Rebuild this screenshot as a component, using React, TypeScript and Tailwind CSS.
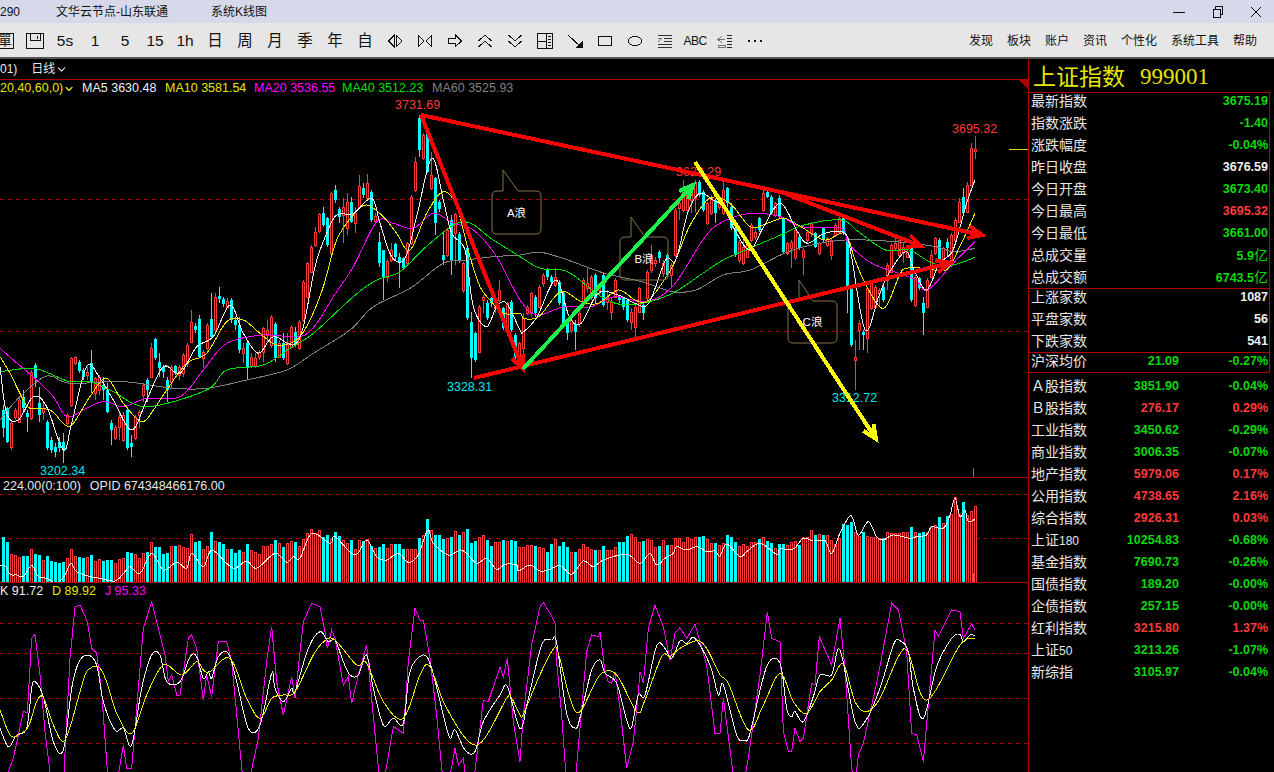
import { ChevronDown } from "lucide-react";

type Pt = [number, number];

// chart data is read off the zoomed picture: x/y are crop coordinates, scaled back in parse()
const parse = (s: string, sx: number, ox: number, oy: number): Pt[] =>
  s
    .trim()
    .split(/\s+/)
    .map((a) => {
      const [x, y] = a.split(",").map(Number);
      return [x / sx + ox, y / 3 + oy] as Pt;
    });

const main = (a: string, b: string) => {
  const l = parse(a, 3, 0, 100);
  return [...l, ...parse(b, 2.958, 500, 100).filter((p) => p[0] > l[l.length - 1][0])];
};
const lower = (a: string, b: string) => {
  const l = parse(a, 3, 0, 475);
  return [...l, ...parse(b, 3, 510, 475).filter((p) => p[0] > l[l.length - 1][0])];
};

const smooth = (p: Pt[]) => {
  let d = `M${p[0][0]} ${p[0][1]}`;
  for (let i = 0; i < p.length - 1; i++) {
    const a = p[i - 1] || p[i];
    const b = p[i];
    const c = p[i + 1];
    const e = p[i + 2] || c;
    d += `C${b[0] + (c[0] - a[0]) / 6} ${b[1] + (c[1] - a[1]) / 6} ${c[0] - (e[0] - b[0]) / 6} ${c[1] - (e[1] - b[1]) / 6} ${c[0]} ${c[1]}`;
  }
  return d;
};

const ma5 = main(
  "0,800 20,940 55,960 100,890 140,920 190,1050 215,970 260,800 300,835 340,900 395,990 440,900 490,800 540,820 590,740 640,710 690,615 730,700 775,760 820,710 880,735 910,680 945,500 980,400 1010,345 1060,340 1115,295 1140,370 1175,470 1215,475 1250,350 1295,175 1330,300 1355,400 1395,450 1420,620 1460,680 1490,620 1520,610 1560,690",
  "70,695 110,650 165,540 205,650 240,670 290,580 350,585 400,610 440,610 490,480 520,480 555,340 590,280 630,300 660,320 700,400 740,450 780,380 830,310 880,395 910,430 960,400 1020,400 1040,470 1080,690 1120,590 1150,520 1200,455 1225,510 1262,570 1300,490 1340,450 1380,310 1405,240"
);
const ma10 = main(
  "0,770 30,820 70,900 90,925 150,930 195,975 220,970 270,890 320,835 370,910 425,965 460,930 500,870 560,790 620,760 680,665 730,660 780,700 830,735 890,720 930,660 970,560 1010,420 1060,345 1100,315 1150,350 1190,400 1230,450 1280,340 1330,275 1370,320 1410,470 1440,560 1470,600 1510,640 1560,640",
  "70,655 115,650 180,575 240,605 290,610 350,570 400,600 440,600 510,500 560,380 620,295 680,310 740,380 790,370 840,355 890,380 960,420 1020,400 1050,480 1085,560 1135,625 1180,530 1200,505 1260,505 1320,510 1360,440 1405,340"
);
const ma20 = main(
  "0,745 40,780 110,840 160,890 200,950 250,930 290,910 320,905 370,920 440,895 540,890 610,810 680,730 790,705 900,710 950,670 1000,590 1060,500 1130,365 1180,370 1240,385 1300,340 1360,370 1420,390 1490,470 1560,600",
  "110,645 190,620 270,620 340,590 430,605 510,560 600,420 650,370 740,340 830,350 890,380 1010,385 1030,430 1100,490 1180,520 1230,540 1265,570 1340,490 1405,425"
);
const ma40 = main(
  "0,815 100,805 170,830 210,845 270,845 340,875 440,920 620,870 680,810 790,795 870,745 940,700 1060,590 1130,540 1200,515 1290,430 1390,365 1480,420 1560,470",
  "120,505 200,515 300,590 380,615 500,585 600,520 660,480 750,440 830,405 900,375 1010,360 1060,395 1140,450 1210,450 1280,490 1340,495 1405,472"
);
const ma60 = main(
  "0,960 60,890 140,828 210,850 370,845 520,865 620,865 740,840 860,810 940,760 1050,690 1120,620 1230,565 1330,490 1400,480 1480,470 1560,465",
  "120,457 200,480 310,520 420,545 510,575 580,570 660,525 740,510 830,465 900,440 1020,420 1170,425 1290,440 1340,455 1405,445"
);

const volLine = lower(
  "0,272 15,272 30,298 50,300 70,305 95,272 115,305 140,310 170,325 195,300 212,265 230,290 270,305 300,310 345,318 375,290 390,275 420,295 455,235 490,285 530,262 560,280 575,235 610,275 635,225 680,265 705,280 740,258 770,280 825,235 860,262 880,245 900,250 935,175 990,205 1005,185 1065,240 1100,195 1130,245 1160,255 1195,235 1225,262 1255,240 1283,165 1300,205 1345,240 1380,225 1400,235 1430,265 1460,250 1490,283 1515,268 1550,270",
  "25,288 60,270 90,288 115,285 150,272 185,298 220,258 250,275 280,255 350,238 390,265 420,235 440,270 465,250 490,235 500,215 530,225 560,215 590,230 615,228 630,243 650,207 690,245 710,230 750,205 800,238 810,222 850,222 880,190 910,198 945,197 965,235 990,175 1023,122 1045,180 1075,140 1100,185 1120,195 1150,180 1200,190 1220,185 1250,180 1265,155 1300,160 1320,120 1335,70 1350,125 1365,105 1375,140 1395,132"
);

const kLine = lower(
  "0,760 25,815 50,780 80,760 95,640 105,620 130,665 160,800 190,825 215,640 235,565 262,540 290,570 310,680 345,765 370,760 395,810 425,640 455,540 480,540 500,620 540,620 570,545 590,545 610,610 625,590 635,610 655,545 685,535 710,620 745,760 780,750 815,595 825,640 850,680 875,640 885,650 925,520 960,470 985,500 1005,495 1030,560 1050,600 1075,600 1100,540 1120,640 1150,750 1180,730 1210,745 1230,590 1270,540 1295,580 1330,720 1350,790 1365,765 1395,825 1425,830 1450,740 1500,660 1522,635 1560,760",
  "55,670 95,510 125,495 140,505 170,715 197,760 212,720 245,585 270,555 285,595 320,625 350,735 365,755 385,660 405,660 440,513 465,520 485,550 510,498 530,505 555,490 600,570 625,660 640,630 680,780 705,795 720,775 770,575 810,565 830,700 845,725 855,710 880,740 910,665 930,600 965,600 990,525 1035,740 1065,740 1110,640 1150,510 1170,497 1195,530 1210,640 1240,730 1280,575 1325,490 1350,478 1360,500 1380,480 1395,483"
);
const dLine = lower(
  "0,705 30,780 55,780 85,755 110,680 130,668 160,750 195,795 240,650 260,590 295,575 320,620 350,715 395,775 440,660 490,570 545,600 590,560 610,585 630,590 690,550 740,670 780,730 815,670 850,660 885,650 940,540 975,497 1005,495 1070,570 1100,565 1150,680 1210,730 1260,600 1290,575 1340,700 1430,810 1520,670 1535,670 1560,720",
  "40,718 85,610 130,522 145,535 180,670 210,710 270,600 320,600 380,710 405,675 455,545 480,545 510,520 560,497 590,520 630,600 655,625 715,765 760,690 810,595 850,680 890,715 930,650 965,615 1000,568 1035,680 1070,710 1110,670 1165,545 1195,533 1250,675 1350,510 1395,490"
);
const jLine = lower(
  "0,930 10,930 40,850 70,710 82,712 95,490 105,478 120,600 135,770 155,930 190,930 210,550 225,395 240,390 262,440 275,520 290,535 305,650 325,930 350,930 370,810 380,880 395,880 430,460 455,380 475,460 495,540 505,620 515,600 530,660 540,660 565,490 575,480 590,520 610,675 620,600 635,665 655,500 680,500 695,560 715,770 730,930 745,930 775,790 800,560 815,455 830,620 850,720 875,605 885,670 910,440 935,385 960,395 975,470 982,520 995,465 1005,490 1030,630 1045,605 1055,685 1075,600 1100,510 1110,620 1140,930 1150,930 1180,755 1210,775 1225,560 1245,400 1260,435 1270,435 1290,550 1310,720 1330,930 1345,930 1365,820 1375,870 1390,850 1400,930 1420,930 1450,675 1465,680 1500,575 1510,605 1522,550 1540,740 1560,860",
  "40,720 65,510 90,395 100,382 120,415 135,445 140,560 155,720 170,930 195,930 210,760 230,530 245,480 265,485 270,470 285,590 295,620 305,625 315,590 330,700 350,880 370,800 385,650 390,590 400,625 415,460 435,390 460,455 480,555 495,475 510,458 530,490 555,448 590,570 615,775 630,775 640,670 665,860 672,930 700,930 715,850 750,600 772,410 785,490 810,500 820,770 835,830 845,830 855,760 870,800 880,790 905,625 915,630 928,485 965,570 990,430 1005,580 1025,880 1035,930 1045,840 1060,805 1105,600 1145,385 1165,405 1190,530 1205,775 1220,780 1240,860 1275,465 1285,485 1325,405 1350,410 1360,490 1385,447 1395,465"
);

// one candle per slot, 4px apart: colour, body top, body bottom, high, low
const candles = `
c930,985,915,1010 c925,1025,920,1030 r970,1040,960,1050 r930,950,925,960 r900,965,895,970 c890,925,870,940 c940,950,930,995 r815,955,810,960 c795,835,790,860 c910,945,860,965
r925,935,910,960 c965,1045,960,1050 c1020,1050,1010,1060 c1040,1055,1030,1070 c1025,1045,1010,1055 c1025,1050,1000,1090 r945,970,940,975 r775,915,770,920 r770,790,768,795 c785,812,780,820
c810,830,805,840 r815,825,800,840 c790,850,750,880 r835,880,830,900 r830,870,825,885 c855,870,830,900 c870,935,850,940 c970,990,960,1035 r980,1015,975,1020 r950,980,940,1020
r945,1020,935,1025 c930,1045,920,1050 c1030,1040,1005,1070 r950,1015,945,1020 r935,945,930,985 r855,885,850,905 c840,870,835,905 r745,830,730,835 c718,775,715,780 c785,805,760,830
c800,815,795,835 c840,870,830,905 r800,845,795,865 c798,820,795,825 r800,825,795,840 r765,820,760,830 r735,790,730,800 r665,725,630,730 c678,690,670,700 c658,770,645,775
r755,775,750,805 r675,745,670,750 c658,710,580,715 r590,690,580,700 c588,598,562,610 c598,612,590,620 r602,620,595,625 c600,660,595,670 c660,675,650,690 c675,750,650,760
r745,760,730,790 c730,800,725,840 r770,798,760,805 r775,798,760,805 r755,770,750,780 r685,755,680,785 r690,705,660,730 r650,735,645,745 c672,775,665,785 r730,770,720,775
c730,775,700,780 r730,790,700,795 r680,740,675,745 c695,735,680,740 r665,745,660,750 r545,660,540,665 r490,590,485,595 r440,515,435,520 r395,435,380,440 r342,392,338,400
c340,375,320,380 c355,435,350,440 r280,460,275,465 c270,300,255,310 c328,350,320,370 r320,345,295,430 r305,385,280,405 c305,365,290,370 r340,370,320,400 r258,320,225,325
c265,285,250,295 r250,295,222,300 c275,360,270,365 r348,362,340,370 c427,488,395,500 c450,530,450,600 r483,530,478,545 r450,480,430,485 c432,470,428,480 c470,490,460,565
c475,505,470,510 r430,490,425,495 r290,430,285,435 r185,270,170,275 c55,150,45,170 r105,175,100,180 c85,215,80,220 r225,265,155,270 c235,370,230,405 c305,328,300,335
c465,480,400,495 r390,465,385,470 c360,480,345,525 r342,400,338,495 c402,480,395,490 r490,570,485,580 c445,655,440,660 c665,775,635,835 c700,780,695,785 r620,755,615,760
r590,600,585,640 c610,655,600,660 c595,610,590,620 r615,625,610,640 r570,600,540,605 c625,685,620,690 r610,680,605,685 c605,690,600,695 c705,770,700,780 r730,790,725,800
r655,745,640,800 r620,640,615,645 r580,640,575,650 c590,640,585,650 r560,620,555,625 r525,550,520,560 c508,530,505,540 c530,545,525,555 r530,555,503,560 c545,610,540,615
c580,670,575,680 c670,700,660,720 r660,690,650,700 c672,695,660,750 r640,670,630,680 r540,605,535,620 r548,565,500,575 r530,590,525,600 c525,595,520,610 r560,570,550,585
c525,615,515,620 r590,605,570,630 r605,635,590,660 r540,590,535,595 c590,600,585,610 c595,620,590,630 c600,660,595,665 r635,665,625,690 r620,680,610,720 r565,635,560,640
c615,640,610,660 r515,595,510,600 r465,510,435,520 r480,490,470,500 c455,475,450,490 r490,520,480,530 c465,525,460,530 r495,525,490,560 r330,465,325,470 r310,325,300,360
r270,330,240,335 r285,330,275,340 r270,300,255,340 r245,295,240,335 c245,285,240,290 c275,330,270,335 r310,370,305,375 r290,340,285,345 c300,340,295,370 r295,320,285,330
r270,340,245,345 c265,310,260,320 c320,385,310,390 c385,465,380,470 r425,480,420,490 r440,490,420,495 r425,470,420,475 r375,420,370,425 r395,410,385,420 c355,390,350,395
r280,330,270,335 c275,290,270,295 c290,340,285,345 r310,345,305,350 c295,350,285,355 c355,455,350,460 r430,460,425,465 r425,445,420,505 r390,470,385,480 c410,445,405,450
r450,470,445,525 r395,420,390,430 r370,400,365,410 c400,440,395,445 r430,460,425,465 c385,420,380,425 r415,435,410,440 r420,465,415,480 r375,405,370,410 r355,395,350,400
c355,400,350,405 c420,560,415,640 c560,735,555,740 r770,780,720,870 r670,690,660,750 c695,705,690,750 r565,715,560,758 r550,625,545,630 r560,620,555,625 r570,580,565,620
c560,600,555,605 r495,540,490,570 r435,515,430,520 r430,445,415,450 r420,465,415,470 r440,455,430,490 r455,470,440,475 c440,600,435,605 r530,615,525,620 c535,565,530,570
c610,640,590,705 r540,620,535,625 r465,530,450,535 r415,460,410,465 c420,485,415,490 r445,480,440,500 c425,445,415,470 r405,480,400,500 r360,420,355,430 r305,365,295,370
c292,340,265,345 r255,335,245,340 r145,255,130,260 r148,152,108,178`
  .trim()
  .split(/\s+/)
  .map((s) => {
    const [t, b, h, l] = s.slice(1).split(",").map((n) => Number(n) / 3 + 100);
    return { up: s[0] === "r", t: Math.round(t), b: Math.round(b), h: Math.round(h), l: Math.round(l) };
  });

const volTops = [
  186, 201, 238, 241, 245, 243, 242, 222, 238, 240, 255, 243, 258, 261, 263, 261, 250, 222, 243, 246,
  248, 246, 240, 258, 253, 258, 256, 256, 265, 253, 250, 232, 234, 237, 250, 235, 232, 202, 215, 215,
  237, 235, 212, 212, 210, 216, 220, 178, 202, 198, 222, 213, 171, 198, 201, 207, 222, 222, 235, 225,
  232, 207, 225, 230, 236, 213, 213, 208, 195, 205, 215, 205, 198, 201, 213, 192, 175, 162, 175, 166,
  185, 180, 192, 171, 183, 195, 205, 195, 222, 195, 198, 192, 213, 218, 216, 208, 218, 208, 208, 208,
  222, 222, 222, 222, 190, 180, 132, 166, 180, 180, 192, 190, 186, 168, 180, 172, 162, 204, 198, 186,
  180, 195, 213, 202, 201, 196, 198, 195, 197, 216, 216, 210, 210, 213, 216, 218, 231, 207, 192, 213,
  201, 216, 231, 231, 222, 208, 215, 222, 224, 225, 213, 225, 225, 215, 201, 201, 183, 178, 186, 202,
  198, 192, 195, 216, 213, 195, 210, 210, 190, 190, 200, 186, 191, 186, 185, 183, 192, 203, 205, 210,
  204, 180, 186, 201, 214, 207, 212, 202, 202, 192, 187, 198, 203, 220, 208, 208, 211, 200, 198, 210,
  186, 187, 165, 180, 178, 180, 180, 194, 208, 190, 148, 150, 140, 172, 183, 172, 183, 185, 187, 190,
  188, 172, 175, 175, 174, 172, 172, 156, 172, 175, 172, 170, 155, 150, 126, 145, 122, 118, 65, 118,
  82, 120, 108, 93,
];

const RED = "#ff3a3a";
const CYAN = "#00ffff";

function Dash({ y }: { y: number }) {
  return <line x1={0} x2={1028} y1={y + 0.5} y2={y + 0.5} stroke="#a00000" strokeDasharray="4 4" />;
}

function Arrow({ x1, y1, x2, y2, color }: { x1: number; y1: number; x2: number; y2: number; color: string }) {
  const a = Math.atan2(y2 - y1, x2 - x1);
  const barb = (d: number) => `${x2 - 15 * Math.cos(a + d)},${y2 - 15 * Math.sin(a + d)}`;
  return (
    <g stroke={color} strokeWidth={4} fill="none">
      <line x1={x1} y1={y1} x2={x2} y2={y2} />
      <polyline points={`${barb(0.42)} ${x2},${y2} ${barb(-0.42)}`} />
    </g>
  );
}

function Bubble({ x, y, w, h, apex, base, label }: { x: number; y: number; w: number; h: number; apex: number; base: number; label: string }) {
  const r = 5;
  const d = `M${x + r} ${y}H${x + 11}V${apex}L${x + 11 + base} ${y}H${x + w - r}Q${x + w} ${y} ${x + w} ${y + r}V${y + h - r}Q${x + w} ${y + h} ${x + w - r} ${y + h}H${x + r}Q${x} ${y + h} ${x} ${y + h - r}V${y + r}Q${x} ${y} ${x + r} ${y}Z`;
  return (
    <g>
      <path d={d} fill="none" stroke="#85744a" />
      <text x={x + w / 2} y={y + h / 2 + 4} textAnchor="middle" fontSize={11.5} fill="#ffffff">
        {label}
      </text>
    </g>
  );
}

function PriceChart() {
  return (
    <svg width={1028} height={397} viewBox="0 80 1028 397" className="block" fontFamily="'Liberation Sans','Noto Sans CJK SC',sans-serif">
      <g shapeRendering="crispEdges">
        <Dash y={199} />
        <Dash y={331} />
        <line x1={1009} x2={1028} y1={149.5} y2={149.5} stroke="#d8d800" />
        <line x1={973.5} x2={973.5} y1={468} y2={477} stroke="#777777" />
        {candles.map((c, i) => {
          const x = 3 + 4 * i;
          const col = c.up ? RED : CYAN;
          return (
            <g key={i}>
              <line x1={x + 0.5} x2={x + 0.5} y1={c.h} y2={c.l} stroke={col} />
              {c.up ? (
                <rect x={x - 0.5} y={c.t + 0.5} width={2} height={Math.max(c.b - c.t, 1)} fill="#000000" stroke={col} />
              ) : (
                <rect x={x - 1} y={c.t} width={3} height={Math.max(c.b - c.t, 1)} fill={col} />
              )}
            </g>
          );
        })}
        <g fill="none">
          <path d={smooth(ma60)} stroke="#808080" />
          <path d={smooth(ma40)} stroke="#00e000" />
          <path d={smooth(ma20)} stroke="#ff00ff" />
          <path d={smooth(ma10)} stroke="#e8e800" />
          <path d={smooth(ma5)} stroke="#f0f0f0" />
        </g>
      </g>
      <g fontSize={12.5}>
        <text x={395} y={109} fill={RED}>3731.69</text>
        <text x={676} y={176} fill={RED}>3628.29</text>
        <text x={952} y={133} fill={RED}>3695.32</text>
        <text x={447} y={391} fill="#00e8e8">3328.31</text>
        <text x={832} y={402} fill="#00e8e8">3312.72</text>
        <text x={40} y={475} fill="#00e8e8">3202.34</text>
      </g>
      <Bubble x={492} y={191} w={49} h={43} apex={170} base={15} label="A浪" />
      <Bubble x={620} y={237} w={48} h={43} apex={217} base={14} label="B浪" />
      <Bubble x={788} y={301} w={49} h={42} apex={280} base={14} label="C浪" />
      <g shapeRendering="crispEdges">
        <Arrow x1={421} y1={115} x2={982} y2={235} color="#ff0000" />
        <Arrow x1={781} y1={192} x2={921} y2={246} color="#ff0000" />
        <Arrow x1={474} y1={378} x2={950} y2={263} color="#ff0000" />
        <Arrow x1={421} y1={115} x2={523} y2={369} color="#ff0000" />
        <Arrow x1={523} y1={369} x2={693} y2={185} color="#1cf24a" />
        <Arrow x1={695} y1={162} x2={876} y2={439} color="#ffff00" />
      </g>
    </svg>
  );
}

function VolumeChart() {
  return (
    <svg width={1028} height={104} viewBox="0 478 1028 104" className="block" shapeRendering="crispEdges">
      <Dash y={494} />
      <Dash y={538} />
      {volTops.map((z, i) => {
        const x = 3 + 4 * i;
        const y = Math.round(z / 3 + 475);
        return candles[i].up ? (
          <rect key={i} x={x - 0.5} y={y + 0.5} width={2} height={582 - y} fill="#000000" stroke={RED} />
        ) : (
          <rect key={i} x={x - 1} y={y} width={3} height={582 - y} fill={CYAN} />
        );
      })}
      <line x1={973.5} x2={973.5} y1={573} y2={582} stroke="#888888" />
      <path d={smooth(volLine)} fill="none" stroke="#f0f0f0" />
    </svg>
  );
}

function KdjChart() {
  return (
    <svg width={1028} height={189} viewBox="0 583 1028 189" className="block" shapeRendering="crispEdges">
      <Dash y={623} />
      <Dash y={653} />
      <Dash y={698} />
      <Dash y={743} />
      <polyline points={jLine.map((p) => p.join(",")).join(" ")} fill="none" stroke="#ff00ff" />
      <path d={smooth(kLine)} fill="none" stroke="#f0f0f0" />
      <path d={smooth(dLine)} fill="none" stroke="#e8e800" />
    </svg>
  );
}

const toolText = ["5s", "1", "5", "15", "1h", "日", "周", "月", "季", "年", "自"];

function ToolIcon({ children }: { children: React.ReactNode }) {
  return (
    <div className="flex h-full w-[30px] items-center justify-center">
      <svg width={18} height={18} viewBox="0 0 18 18" fill="none" stroke="#111111" shapeRendering="crispEdges">
        {children}
      </svg>
    </div>
  );
}

function Toolbar() {
  return (
    <div className="flex h-[34px] items-center overflow-hidden bg-[#e6e6e6] pt-[2px] text-[#111111]">
      <div className="-ml-[10px] flex h-full items-center">
        <div className="flex h-full w-[30px] items-center justify-center">
          <span className="border border-[#111111] px-[1px] text-[13px] leading-[14px]">單</span>
        </div>
        <ToolIcon>
          <path d="M0.5 1.5H17.5V16.5H0.5ZM4.5 1.5V8.5H14.5V1.5M11.5 3.5V6.5" />
        </ToolIcon>
        {toolText.map((t) => (
          <div key={t} className="flex h-full w-[30px] items-center justify-center text-[15.5px]">
            {t}
          </div>
        ))}
        <ToolIcon>
          <path d="M8 3.5V14.5L2.5 9ZM10.5 3.5V14.5L16 9Z" />
        </ToolIcon>
        <ToolIcon>
          <path d="M2.5 3.5V14.5L8 9ZM15.5 3.5V14.5L10 9Z" />
        </ToolIcon>
        <ToolIcon>
          <path d="M2.5 6.5H9.5V3L15.5 9L9.5 14.5V11.5H2.5Z" />
        </ToolIcon>
        <ToolIcon>
          <path d="M2.5 9L9 3L15.5 9M2.5 15L9 9L15.5 15" />
        </ToolIcon>
        <ToolIcon>
          <path d="M2.5 3L9 9L15.5 3M2.5 9L9 15L15.5 9" />
        </ToolIcon>
        <ToolIcon>
          <path d="M1.5 1.5H16.5V16.5H1.5ZM10.5 1.5V16.5M1.5 9.5H10.5M12 4.5H15M12 7.5H15M12 10.5H15M12 13.5H15" />
        </ToolIcon>
        <ToolIcon>
          <path d="M2 3L15 15" />
          <path d="M11 15H16V10Z" fill="#111111" />
        </ToolIcon>
        <ToolIcon>
          <rect x={2.5} y={4.5} width={13} height={9} />
        </ToolIcon>
        <ToolIcon>
          <ellipse cx={9} cy={9} rx={7} ry={4.5} />
        </ToolIcon>
        <ToolIcon>
          <path d="M2 3.5H16M8 6.5H16M8 9.5H16M2 12.5H16M2 15.5H16" stroke="#333333" />
          <path d="M2 10L6 6M2 6.5H5" stroke="#777777" />
        </ToolIcon>
        <div className="flex h-full w-[30px] items-center justify-center text-[12px] tracking-[-0.5px]">ABC</div>
        <ToolIcon>
          <path d="M11 3.5H16M11 6.5H16M11 9.5H16M11 12.5H16M11 15.5H16" stroke="#222222" strokeWidth={1} />
          <path d="M2 7.5H9M6 4L2 7.5L6 11M2 13H9V15.5H2Z" stroke="#777777" />
        </ToolIcon>
        <div className="flex h-full w-[30px] items-center justify-center gap-[4px]">
          <i className="size-[2px] bg-[#111111]" />
          <i className="size-[2px] bg-[#111111]" />
          <i className="size-[2px] bg-[#111111]" />
        </div>
      </div>
      <div className="ml-auto flex gap-[14px] pr-[17px] text-[12px]">
        {["发现", "板块", "账户", "资讯", "个性化", "系统工具", "帮助"].map((m) => (
          <span key={m}>{m}</span>
        ))}
      </div>
    </div>
  );
}

function TitleBar() {
  return (
    <div className="flex h-[23px] items-center bg-[#d5d9e9] text-[12px] text-[#111111]">
      <span className="w-[56px]">290</span>
      <span className="w-[155px]">文华云节点-山东联通</span>
      <span>系统K线图</span>
      <div className="ml-auto flex">
        <div className="flex w-[39px] justify-center">
          <svg width={14} height={14} viewBox="0 0 14 14" stroke="#111111" shapeRendering="crispEdges">
            <path d="M1 7.5H13" />
          </svg>
        </div>
        <div className="flex w-[39px] justify-center">
          <svg width={14} height={14} viewBox="0 0 14 14" fill="none" stroke="#111111" shapeRendering="crispEdges">
            <path d="M2.5 4.5H9.5V12.5H2.5ZM4.5 4.5V1.5H11.5V9.5H9.5" />
          </svg>
        </div>
        <div className="flex w-[37px] justify-center">
          <svg width={14} height={14} viewBox="0 0 14 14" stroke="#111111">
            <path d="M2 2L12 12M12 2L2 12" />
          </svg>
        </div>
      </div>
    </div>
  );
}

const GREEN = "text-[#0cd80c]";
const PINK = "text-[#ff3a3a]";
const WHITE = "text-[#f0f0f0]";

function QuoteRow({ label, value, tone }: { label: string; value: React.ReactNode; tone: string }) {
  return (
    <div className="flex h-[22px] shrink-0 items-center justify-between pl-[2px] pr-[1px]">
      <span className="text-[14px] text-[#e8e8e8]">{label}</span>
      <span className={`text-[12.5px] font-bold ${tone}`}>{value}</span>
    </div>
  );
}

function IndexRow({ label, price, pct, up }: { label: React.ReactNode; price: string; pct: string; up: boolean }) {
  const tone = up ? PINK : GREEN;
  return (
    <div className="grid h-[22px] grid-cols-[60px_88px_89px] items-center pl-[2px] text-[12.5px] font-bold">
      <span className="whitespace-nowrap text-[14px] font-normal text-[#e8e8e8]">{label}</span>
      <span className={`text-right ${tone}`}>{price}</span>
      <span className={`text-right ${tone}`}>{pct}</span>
    </div>
  );
}

const yi = <span className="text-[14px] font-normal">亿</span>;

const indexes: [React.ReactNode, string, string, boolean][] = [
  ["Ａ股指数", "3851.90", "-0.04%", false],
  ["Ｂ股指数", "276.17", "0.29%", true],
  ["工业指数", "3450.62", "-0.29%", false],
  ["商业指数", "3006.35", "-0.07%", false],
  ["地产指数", "5979.06", "0.17%", true],
  ["公用指数", "4738.65", "2.16%", true],
  ["综合指数", "2926.31", "0.03%", true],
  [<>上证<span className="text-[12px]">180</span></>, "10254.83", "-0.68%", false],
  ["基金指数", "7690.73", "-0.26%", false],
  ["国债指数", "189.20", "-0.00%", false],
  ["企债指数", "257.15", "-0.00%", false],
  ["红利指数", "3215.80", "1.37%", true],
  [<>上证<span className="text-[12px]">50</span></>, "3213.26", "-1.07%", false],
  ["新综指", "3105.97", "-0.04%", false],
];

function QuotePanel() {
  return (
    <div className="flex-1 border-l border-[#b00000]">
      <div className="flex h-[33px] items-end pl-[4px] text-[#e6e600]">
        <span className="text-[23px] leading-[30px]">上证指数</span>
        <span className="ml-[15px] font-['Liberation_Serif',serif] text-[23px] leading-[30px]">999001</span>
      </div>
      <div className="w-[241px]">
        <div className="flex h-[197px] flex-col justify-end border-y border-r border-[#b00000]">
          <QuoteRow label="最新指数" value="3675.19" tone={GREEN} />
          <QuoteRow label="指数涨跌" value="-1.40" tone={GREEN} />
          <QuoteRow label="涨跌幅度" value="-0.04%" tone={GREEN} />
          <QuoteRow label="昨日收盘" value="3676.59" tone={WHITE} />
          <QuoteRow label="今日开盘" value="3673.40" tone={GREEN} />
          <QuoteRow label="今日最高" value="3695.32" tone={PINK} />
          <QuoteRow label="今日最低" value="3661.00" tone={GREEN} />
          <QuoteRow label="总成交量" value={<>5.9{yi}</>} tone={GREEN} />
          <QuoteRow label="总成交额" value={<>6743.5{yi}</>} tone={GREEN} />
        </div>
        <div className="flex h-[64px] flex-col justify-end border-b border-r border-[#b00000]">
          <QuoteRow label="上涨家数" value="1087" tone={WHITE} />
          <QuoteRow label="平盘家数" value="56" tone={WHITE} />
          <QuoteRow label="下跌家数" value="541" tone={WHITE} />
        </div>
        <div className="flex h-[20px] flex-col justify-end border-b border-r border-[#b00000]">
          <div className="shrink-0">
            <IndexRow label="沪深均价" price="21.09" pct="-0.27%" up={false} />
          </div>
        </div>
      </div>
      <div className="mt-[2px]">
        {indexes.map(([label, price, pct, up]) => (
          <IndexRow key={price} label={label} price={price} pct={pct} up={up} />
        ))}
      </div>
    </div>
  );
}

export default function App() {
  return (
    <div className="flex h-[772px] w-[1274px] flex-col overflow-hidden bg-black font-['Liberation_Sans','Noto_Sans_CJK_SC',sans-serif]">
      <TitleBar />
      <Toolbar />
      <div className="h-[2px] bg-[#555555]" />
      <div className="flex min-h-0 flex-1">
        <div className="w-[1028px] shrink-0">
          {/* 周期バー */}
          <div className="relative flex h-[21px] items-center gap-[14px] border-b border-[#b00000] text-[12px] text-[#e8e8e8]">
            <span>01)</span>
            <span className="flex items-center">
              日线
              <ChevronDown size={13} strokeWidth={2} />
            </span>
            <svg width={10} height={10} viewBox="0 0 10 10" className="absolute right-0 top-[20px] z-10">
              <path d="M0 0H10V10Z" fill="#b00000" />
            </svg>
          </div>
          <div className="relative h-[397px]">
            <PriceChart />
            <div className="absolute left-0 top-[1px] flex items-center text-[12.5px] leading-[15px]">
              <span className="flex w-[82px] items-center text-[#e6e600]">
                20,40,60,0)
                <ChevronDown size={12} strokeWidth={2.5} />
              </span>
              <span className="w-[83px] text-[#f0f0f0]">MA5 3630.48</span>
              <span className="w-[89px] text-[#e6e600]">MA10 3581.54</span>
              <span className="w-[88px] text-[#ff00ff]">MA20 3536.55</span>
              <span className="w-[90px] text-[#00e000]">MA40 3512.23</span>
              <span className="text-[#808080]">MA60 3525.93</span>
            </div>
          </div>
          <div className="relative h-[106px] border-y border-[#b00000]">
            <VolumeChart />
            <div className="absolute left-[3px] top-[1px] flex gap-[9px] text-[12.5px] leading-[15px] text-[#e8e8e8]">
              <span>224.00(0:100)</span>
              <span>OPID 674348466176.00</span>
            </div>
          </div>
          <div className="relative h-[189px]">
            <KdjChart />
            <div className="absolute left-0 top-[1px] flex gap-[9px] text-[12.5px] leading-[15px]">
              <span className="text-[#f0f0f0]">K 91.72</span>
              <span className="text-[#e6e600]">D 89.92</span>
              <span className="text-[#ff00ff]">J 95.33</span>
            </div>
          </div>
        </div>
        <QuotePanel />
      </div>
    </div>
  );
}
